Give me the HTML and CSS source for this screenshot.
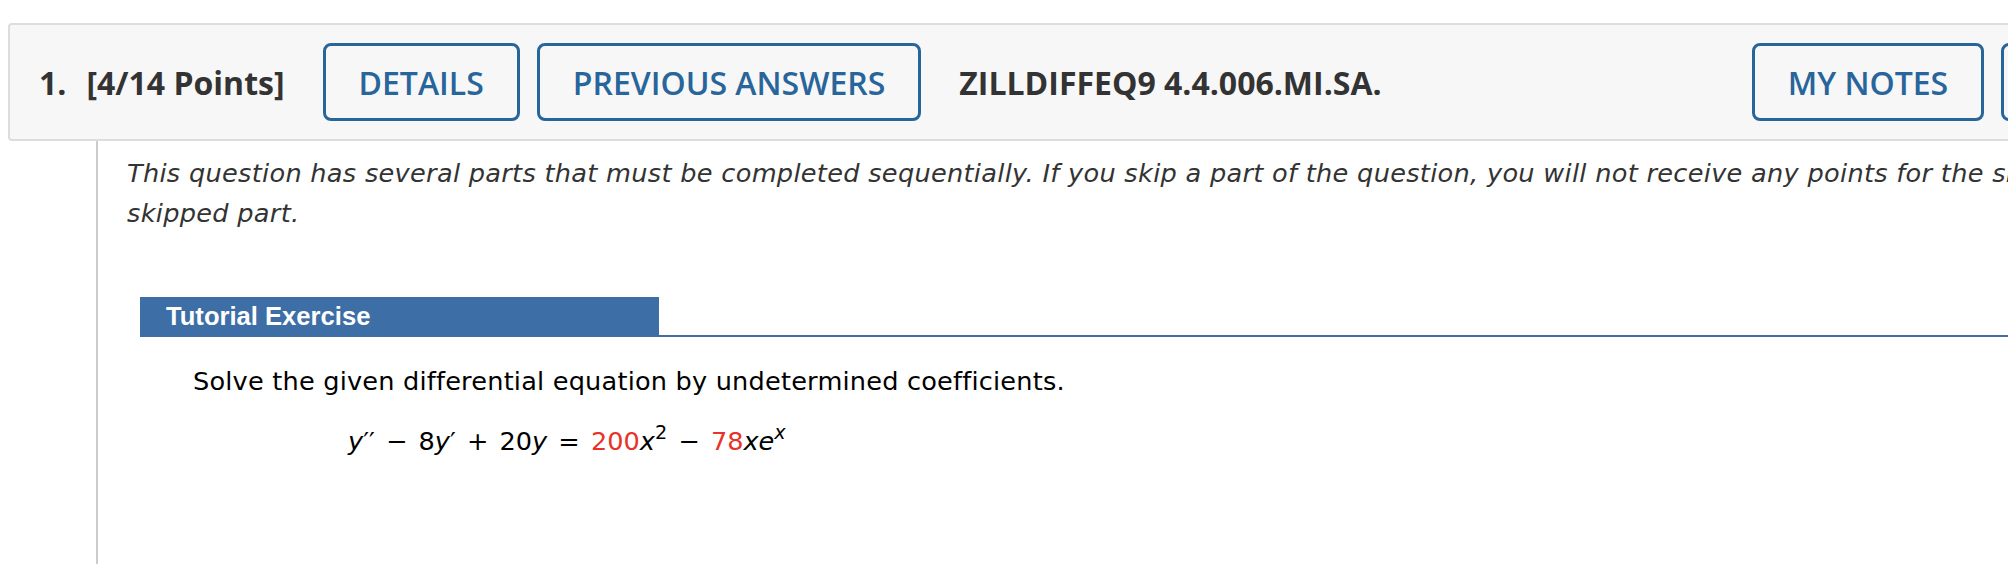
FILE: index.html
```html
<!DOCTYPE html>
<html lang="en">
<head>
<meta charset="utf-8">
<title>Question 1</title>
<link rel="stylesheet" href="styles.css">
</head>
<body>
<div class="page">
  <div class="qhead">
    <span class="qnum">1.</span>
    <span class="qpoints">[4/14 Points]</span>
    <button class="btn">DETAILS</button>
    <button class="btn">PREVIOUS ANSWERS</button>
    <span class="qref">ZILLDIFFEQ9 4.4.006.MI.SA.</span>
    <div class="qtools">
      <button class="btn">MY NOTES</button>
      <button class="btn">ASK YOUR TEACHER</button>
    </div>
  </div>
  <div class="qbody">
    <p class="note">This question has several parts that must be completed sequentially. If you skip a part of the question, you will not receive any points for the skipped part, and you will not be able to come back to the<br>skipped part.</p>
    <div class="tutorial">
      <div class="tut-head"><span class="tut-tab">Tutorial Exercise</span></div>
      <p class="prompt">Solve the given differential equation by undetermined coefficients.</p>
      <p class="eq"><i>y</i>′′ − 8<i>y</i>′ + 20<i>y</i> = <span class="red">200</span><i>x</i><sup>2</sup> − <span class="red">78</span><i>xe</i><sup><i>x</i></sup></p>
    </div>
  </div>
</div>
</body>
</html>
```

FILE: styles.css
```css
html, body {
  margin: 0;
  padding: 0;
  background: #fff;
  overflow: hidden;
}

body {
  width: 2008px;
  height: 564px;
}

.page {
  width: 2400px;
  padding: 23px 8px 0;
}

.qhead {
  display: flex;
  align-items: center;
  height: 118px;
  box-sizing: border-box;
  border: 2px solid #dddddd;
  border-radius: 4px;
  background: #f7f7f7;
  padding: 0 29px;
  font-family: "Open Sans", sans-serif;
  color: #333333;
}

.qnum {
  font-size: 32px;
  font-weight: 700;
  margin-right: 20px;
}

.qpoints {
  font-size: 32px;
  font-weight: 700;
  margin-right: 38px;
}

.btn {
  height: 78px;
  box-sizing: border-box;
  padding: 0 33px;
  border: 3px solid #28659a;
  border-radius: 8px;
  background: transparent;
  color: #28659a;
  font-family: "Open Sans", sans-serif;
  font-size: 32px;
  font-weight: 600;
  margin-right: 17px;
  white-space: nowrap;
}

.qref {
  font-size: 32px;
  font-weight: 700;
  margin-left: 21px;
}

.qtools {
  margin-left: auto;
  display: flex;
}

.qtools .btn:last-child {
  margin-right: 0;
}

.qbody {
  margin-left: 88px;
  border-left: 2px solid #cccccc;
  padding: 12px 0 0 29px;
  height: 430px;
  box-sizing: border-box;
}

.note {
  margin: 0;
  font-family: "DejaVu Sans", Verdana, sans-serif;
  font-style: italic;
  font-size: 25.6px;
  line-height: 40px;
  letter-spacing: 0.3px;
  color: #333333;
  white-space: nowrap;
}

.tutorial {
  margin: 64px 0 0 13px;
}

.tut-head {
  border-bottom: 2px solid #3e6ea6;
}

.tut-tab {
  display: block;
  width: 519px;
  height: 38px;
  box-sizing: border-box;
  padding-left: 26px;
  background: #3e6ea6;
  color: #ffffff;
  font-family: "Liberation Sans", Arial, sans-serif;
  font-weight: 700;
  font-size: 25.6px;
  line-height: 38px;
}

.prompt {
  margin: 24px 0 0 53px;
  font-family: "DejaVu Sans", Verdana, sans-serif;
  font-size: 25.6px;
  line-height: 40px;
  letter-spacing: 0.2px;
  color: #000000;
}

.eq {
  margin: 20px 0 0 208px;
  font-family: "DejaVu Sans", Verdana, sans-serif;
  font-size: 25.6px;
  line-height: 40px;
  word-spacing: 3px;
  color: #000000;
  white-space: nowrap;
}

.eq sup {
  font-size: 0.75em;
  line-height: 0;
  vertical-align: 0.55em;
}

.red {
  color: #e8322a;
}
```
